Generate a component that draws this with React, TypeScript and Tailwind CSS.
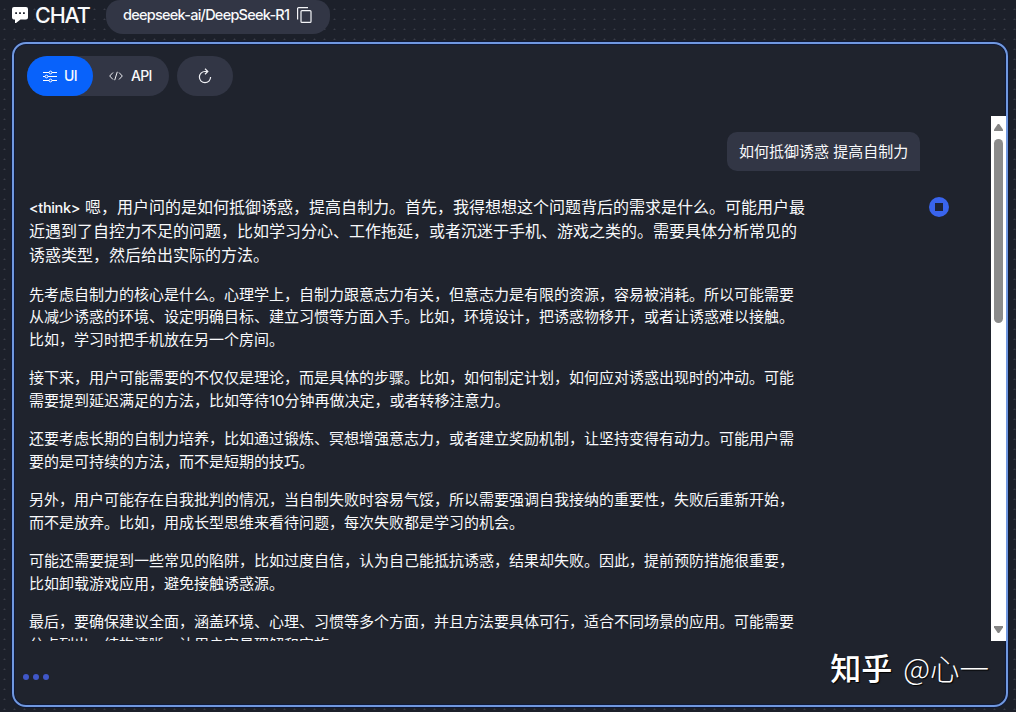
import clsx from 'clsx';

const PARAGRAPHS = [
  [
    '先考虑自制力的核心是什么。心理学上，自制力跟意志力有关，但意志力是有限的资源，容易被消耗。所以可能需要',
    '从减少诱惑的环境、设定明确目标、建立习惯等方面入手。比如，环境设计，把诱惑物移开，或者让诱惑难以接触。',
    '比如，学习时把手机放在另一个房间。',
  ],
  [
    '接下来，用户可能需要的不仅仅是理论，而是具体的步骤。比如，如何制定计划，如何应对诱惑出现时的冲动。可能',
    '需要提到延迟满足的方法，比如等待10分钟再做决定，或者转移注意力。',
  ],
  [
    '还要考虑长期的自制力培养，比如通过锻炼、冥想增强意志力，或者建立奖励机制，让坚持变得有动力。可能用户需',
    '要的是可持续的方法，而不是短期的技巧。',
  ],
  [
    '另外，用户可能存在自我批判的情况，当自制失败时容易气馁，所以需要强调自我接纳的重要性，失败后重新开始，',
    '而不是放弃。比如，用成长型思维来看待问题，每次失败都是学习的机会。',
  ],
  [
    '可能还需要提到一些常见的陷阱，比如过度自信，认为自己能抵抗诱惑，结果却失败。因此，提前预防措施很重要，',
    '比如卸载游戏应用，避免接触诱惑源。',
  ],
  [
    '最后，要确保建议全面，涵盖环境、心理、习惯等多个方面，并且方法要具体可行，适合不同场景的应用。可能需要',
    '分点列出，结构清晰，让用户容易理解和实施。',
  ],
];

const Lines = ({ lines, className }: { lines: string[]; className?: string }) => (
  <p className={clsx('whitespace-nowrap', className)}>
    {lines.map((line) => (
      <span key={line} className="block">
        {line}
      </span>
    ))}
  </p>
);

const Header = () => (
  <header className="flex h-[34px] shrink-0 items-start pl-3">
    <svg className="mt-[7px] h-4 w-4 shrink-0" viewBox="0 0 16 16">
      <path
        fill="#fff"
        d="M2 0h12a2 2 0 0 1 2 2v8.500a2 2 0 0 1-2 2H8.500L4 16H3v-3.500H2a2 2 0 0 1-2-2V2a2 2 0 0 1 2-2Z"
      />
      <path fill="#20232e" d="M3.200 5.200h1.800v1.800H3.200zM7.100 5.200h1.800v1.800H7.100zM11 5.200h1.800v1.800H11z" />
    </svg>
    <h1 className="ml-[7px] w-[55px] text-[21.500px] font-medium leading-[31px] tracking-[-1.1px] whitespace-nowrap">
      CHAT
    </h1>
    <button className="ml-4 flex h-[34px] w-[224px] items-start rounded-b-[17px] rounded-t-[14px] bg-[#323645] pl-[17px]">
      <span className="w-[168px] text-left text-[14.500px] font-medium leading-[30px] tracking-[-0.75px] whitespace-nowrap">
        deepseek-ai/DeepSeek-R1
      </span>
      <svg className="ml-1.5 mt-[7px] h-4 w-[15px]" viewBox="0 0 15 16" fill="none" stroke="#f4f5f8" strokeWidth="1.200">
        <rect x="4" y="3.600" width="10" height="11.800" rx="1" />
        <path d="M.6 12.500V1.600a1 1 0 0 1 1-1H11" />
      </svg>
    </button>
  </header>
);

const Toolbar = () => (
  <div className="flex h-10 shrink-0 gap-2 pl-[13px] text-sm font-medium">
    <div className="flex w-[142px] rounded-full bg-[#323645]">
      <button className="flex h-10 w-[66px] items-center rounded-full bg-[#0862fb] pl-4">
        <svg className="h-[13px] w-[14px]" viewBox="0 0 14 13" fill="none" stroke="#fff" strokeWidth="1">
          <path d="M0 2.500h6M9 2.500h5M0 6.500h2M5 6.500h9M0 10.500h6M9 10.500h5" />
          <circle cx="7.500" cy="2.500" r="1.400" />
          <circle cx="3.500" cy="6.500" r="1.400" />
          <circle cx="7.500" cy="10.500" r="1.400" />
        </svg>
        <span className="ml-[7px] tracking-[-0.7px]">UI</span>
      </button>
      <button className="flex flex-1 items-center pl-4">
        <svg className="h-[10px] w-[14px]" viewBox="0 0 14 10" fill="none" stroke="#f0f1f5" strokeWidth="1">
          <path d="M4 1.500.7 5 4 8.500M10 1.500 13.300 5 10 8.500M8.300.8 5.700 9.200" />
        </svg>
        <span className="ml-2 tracking-[-0.7px]">API</span>
      </button>
    </div>
    <button className="flex w-14 items-center justify-center rounded-full bg-[#323645]">
      <svg className="h-4 w-[14px]" viewBox="0 0 14 16" fill="none" stroke="#f0f1f5" strokeWidth="1.200">
        <path d="M9.500 3.500H7a5.600 5.600 0 1 0 5.600 5.600M7 .8l2.800 2.700L7 6.200" />
      </svg>
    </button>
  </div>
);

const Scrollbar = () => (
  <div className="flex w-[15px] shrink-0 flex-col items-center bg-white py-2">
    <svg className="h-2 w-[9px] shrink-0" viewBox="0 0 9 8">
      <path fill="#858585" d="M3.800 0h1.400L9 5.500V7H0V5.500z" />
    </svg>
    <div className="mt-[7px] h-[184px] w-[9px] shrink-0 rounded-full bg-[#8b8b8b]" />
    <svg className="mt-auto h-[7px] w-[9px] shrink-0" viewBox="0 0 9 7">
      <path fill="#858585" d="M0 0h9v1.500L5.200 7H3.800L0 1.500z" />
    </svg>
  </div>
);

const Conversation = () => (
  <div className="mt-5 flex h-[525px] shrink-0 overflow-hidden">
    <div className="flex-1 pl-[15px] pt-4">
      <div className="ml-[698px] flex h-[39px] w-[193px] items-center rounded-t-[10px] rounded-bl-[10px] bg-[#323645] pl-3 pt-px text-[15px] whitespace-nowrap">
        如何抵御诱惑 提高自制力
      </div>
      <div className="mt-6 flex">
        <div className="w-[900px] space-y-4 text-[15px] leading-[22.5px]">
          <p className="pb-[0.5px] text-base leading-6 whitespace-nowrap">
            <span className="inline-block w-[56px] text-[14.500px] font-medium leading-none tracking-[-0.35px]">
              &lt;think&gt;
            </span>
            嗯，用户问的是如何抵御诱惑，提高自制力。首先，我得想想这个问题背后的需求是什么。可能用户最
            <br />
            近遇到了自控力不足的问题，比如学习分心、工作拖延，或者沉迷于手机、游戏之类的。需要具体分析常见的
            <br />
            诱惑类型，然后给出实际的方法。
          </p>
          {PARAGRAPHS.map((lines) => (
            <Lines key={lines[0]} lines={lines} />
          ))}
        </div>
        <button className="mt-0.5 flex h-5 w-5 items-center justify-center rounded-full bg-[#3964ed]">
          <span className="h-2 w-2 bg-[#1d2337]" />
        </button>
      </div>
    </div>
    <Scrollbar />
  </div>
);

const App = () => (
  <div className="flex h-[712px] w-[1016px] flex-col overflow-hidden bg-[#1c202a] bg-[radial-gradient(circle_at_4.5px_9.5px,#383b46_0.6px,transparent_1.4px)] bg-[length:10px_10px] font-[Inter,'Noto_Sans_CJK_SC',sans-serif] text-[#f8f9fb]">
    <Header />
    <main className="relative ml-3 mt-2 flex h-[665px] w-[996px] flex-col rounded-[14px] border-2 border-[#7098e0] bg-[#1f232d] pt-3 shadow-[0_0_0_1px_#101a38,inset_0_0_0_1px_#101a38]">
      <Toolbar />
      <Conversation />
      <footer className="flex flex-1 justify-between pl-[9px] pr-[17px]">
        <div className="mt-[33px] flex gap-1">
          <span className="h-1.5 w-1.5 rounded-full bg-[#4057c8]" />
          <span className="h-1.5 w-1.5 rounded-full bg-[#4057c8]" />
          <span className="h-1.5 w-1.5 rounded-full bg-[#4057c8]" />
        </div>
        <div className="mt-[3px] flex gap-[11px] font-['Noto_Sans_CJK_SC',sans-serif] leading-[46px] text-white [text-shadow:1px_1px_1px_#000]">
          <span className="text-[31px] font-medium">知乎</span>
          <span className="text-[29.500px] font-light">@心一</span>
        </div>
      </footer>
    </main>
  </div>
);

export default App;
